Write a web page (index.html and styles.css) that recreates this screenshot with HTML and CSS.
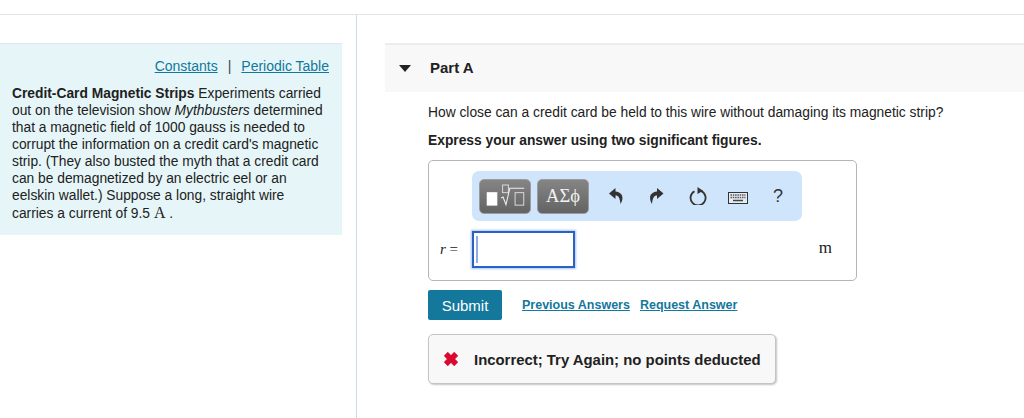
FILE: index.html
```html
<!DOCTYPE html>
<html lang="en">
<head>
  <meta charset="UTF-8" />
  <title>Part A</title>
  <link rel="stylesheet" href="styles.css">
</head>
<body>
  <div class="page">
    <aside class="side">
      <div class="info">
        <div class="info-links">
          <a href="#">Constants</a>
          <span class="sep">|</span>
          <a href="#">Periodic Table</a>
        </div>
        <p><b>Credit-Card Magnetic Strips</b> Experiments carried<br>
        out on the television show <i>Mythbusters</i> determined<br>
        that a magnetic field of 1000 gauss is needed to<br>
        corrupt the information on a credit card's magnetic<br>
        strip. (They also busted the myth that a credit card<br>
        can be demagnetized by an electric eel or an<br>
        eelskin wallet.) Suppose a long, straight wire<br>
        carries a current of 9.5 <span class="unit">A</span> .</p>
      </div>
    </aside>
    <main class="main">
      <div class="part-head">
        <svg class="caret" width="12" height="7" viewBox="0 0 12 7"><path d="M0 0h12L6 7z" fill="#222"/></svg>
        <span>Part A</span>
      </div>
      <div class="part-body">
        <p class="question">How close can a credit card be held to this wire without damaging its magnetic strip?</p>
        <p class="hint">Express your answer using two significant figures.</p>
        <div class="answer">
          <div class="toolbar">
            <button class="tool-btn tool-math">
              <svg width="52" height="35" viewBox="0 0 52 35">
                <rect x="7" y="13" width="11" height="14" fill="#fff"/>
                <rect x="23.500" y="5.500" width="6" height="8" fill="none" stroke="#ddd"/>
                <path d="M22 19l2-1 3 8 4-17h15" fill="none" stroke="#eee" stroke-width="1.100"/>
                <rect x="36.500" y="13.500" width="9" height="13" fill="none" stroke="#ddd"/>
              </svg>
            </button>
            <button class="tool-btn tool-greek">ΑΣϕ</button>
            <svg class="tool-icon undo" width="14" height="16" viewBox="0 0 14 16"><path d="M6.500 0L0 5.500 6.500 11V7.500c3 0 4.500 2.500 5 8.500 3.500-6 2.500-11.500-5-12.500z" fill="#333"/></svg>
            <svg class="tool-icon redo" width="15" height="16" viewBox="0 0 14 16"><path d="M7.500 0L14 5.500 7.500 11V7.500c-3 0-4.500 2.500-5 8.500C-1 10 0 4.500 7.500 3.500z" fill="#333"/></svg>
            <svg class="tool-icon reset" width="18" height="18" viewBox="0 0 18 18"><path d="M5.500 4.200a7.500 7.500 0 1 0 6.500-.300" fill="none" stroke="#333" stroke-width="1.800"/><path d="M8.500 0l5.500 3.800-5.500 3.200z" fill="#333"/></svg>
            <svg class="tool-icon keys" width="20" height="12" viewBox="0 0 20 12"><rect x=".5" y=".5" width="19" height="11" fill="#e4edf6" stroke="#333"/><path d="M2.500 3h15M2.500 5.500h15" stroke="#555" stroke-width="1.300" stroke-dasharray="1.500 .8"/><path d="M5 8.500h10" stroke="#444" stroke-width="1.500"/></svg>
            <span class="tool-help">?</span>
          </div>
          <div class="answer-row">
            <label class="var"><i>r</i> =</label>
            <div class="field"><span class="cursor"></span></div>
            <span class="answer-unit">m</span>
          </div>
        </div>
        <div class="actions">
          <button class="submit">Submit</button>
          <a href="#">Previous Answers</a>
          <a href="#">Request Answer</a>
        </div>
        <div class="feedback">
          <svg width="16" height="16" viewBox="0 0 15 15"><path d="M1.500 4.500L4.500 1.500 7.500 4.500l3-3 3 3-3 3 3 3-3 3-3-3-3 3-3-3 3-3z" fill="#d9092f" stroke="#d9092f" stroke-linejoin="round"/></svg>
          <span>Incorrect; Try Again; no points deducted</span>
        </div>
      </div>
    </main>
  </div>
</body>
</html>
```

FILE: styles.css
```css
html, body {
  margin: 0;
  height: 100%;
  overflow: hidden;
}
body {
  background-color: #fff;
  color: #212121;
  font-family: "Liberation Sans", Arial, sans-serif;
  font-size: 13.8px;
}
a {
  color: #12789c;
}
.page {
  display: flex;
  margin-top: 14px;
  height: 404px;
  border-top: 1px solid #dfe3e6;
}
.side {
  flex: none;
  width: 357px;
  box-sizing: border-box;
  padding-top: 28px;
  border-right: 1px solid #c5dbe6;
}
.info {
  width: 342px;
  height: 192px;
  box-sizing: border-box;
  padding: 13px 13px 0 12px;
  background-color: #e6f6f8;
  border-top: 1px solid #dfe9ea;
}
.info-links {
  display: flex;
  justify-content: flex-end;
  gap: 10px;
  font-size: 14px;
  line-height: 18px;
}
.info-links .sep {
  color: #444;
}
.info p {
  margin: 10px 0 0;
  line-height: 17px;
  white-space: nowrap;
}
.unit {
  font-family: "Liberation Serif", serif;
  font-size: 16px;
}
.main {
  flex: 1;
  padding: 28px 0 0 28px;
}
.part-head {
  display: flex;
  align-items: center;
  height: 47px;
  background-color: #f8f8f8;
  border-top: 2px solid #ececec;
  font-weight: bold;
  font-size: 15px;
}
.caret {
  margin: 0 19px 0 14px;
}
.part-head span {
  margin-top: -2px;
}
.part-body {
  padding-left: 43px;
}
.question {
  margin: 12px 0 0;
  line-height: 17px;
}
.hint {
  margin: 11px 0 0;
  line-height: 17px;
  font-weight: bold;
}
.answer {
  width: 429px;
  height: 121px;
  margin-top: 11px;
  box-sizing: border-box;
  padding: 10px 0 0 43px;
  border: 1px solid #b5b5b5;
  border-radius: 5px;
}
.toolbar {
  display: flex;
  align-items: center;
  width: 330px;
  height: 50px;
  box-sizing: border-box;
  padding-left: 7px;
  background-color: #cfe5fc;
  border-radius: 7px;
}
.tool-btn {
  display: flex;
  align-items: center;
  justify-content: center;
  height: 35px;
  padding: 0;
  border: 1px solid #9c9c9c;
  border-radius: 5px;
  background: linear-gradient(#858585, #636363);
  color: #f2f2f2;
  font-family: "Liberation Serif", serif;
  font-size: 18.500px;
}
.tool-math {
  width: 52px;
  margin-right: 6px;
}
.tool-greek {
  width: 52px;
}
.tool-icon {
  flex: none;
}
.undo {
  margin-left: 20px;
}
.redo {
  margin-left: 26px;
}
.reset {
  margin-left: 25px;
}
.keys {
  margin-left: 21px;
  margin-top: 3px;
}
.tool-help {
  margin-left: 25px;
  color: #333;
  font-size: 18px;
}
.answer-row {
  display: flex;
  align-items: center;
  margin-top: 10px;
  margin-left: -43px;
}
.var {
  width: 43px;
  box-sizing: border-box;
  padding-left: 11px;
  font-family: "Liberation Serif", serif;
  font-size: 15px;
}
.field {
  display: flex;
  align-items: center;
  width: 103px;
  height: 37px;
  box-sizing: border-box;
  padding-left: 2px;
  border: 2px solid #2a62c4;
  box-shadow: 0 0 2px 1px #a9c4ec;
}
.cursor {
  width: 2px;
  height: 27px;
  background-color: #8fabe8;
}
.answer-unit {
  margin: -3px 24px 0 auto;
  font-family: "Liberation Serif", serif;
  font-size: 17px;
}
.actions {
  display: flex;
  align-items: center;
  margin-top: 9px;
  gap: 10px;
}
.actions a {
  font-size: 12.500px;
  font-weight: bold;
}
.submit {
  width: 74px;
  height: 30px;
  margin-right: 10px;
  padding: 0;
  border: 0;
  border-radius: 2px;
  background-color: #13789c;
  color: #fff;
  font-family: inherit;
  font-size: 15px;
}
.feedback {
  display: flex;
  align-items: center;
  gap: 15px;
  width: 348px;
  height: 50px;
  margin-top: 14px;
  box-sizing: border-box;
  padding-left: 14px;
  border: 1px solid #c4c4c4;
  border-radius: 5px;
  background-color: #f8f8f8;
  box-shadow: 1px 1px 2px #c4c4c4;
  font-size: 14.900px;
  font-weight: bold;
}
.feedback span {
  margin-top: 2px;
}
```
